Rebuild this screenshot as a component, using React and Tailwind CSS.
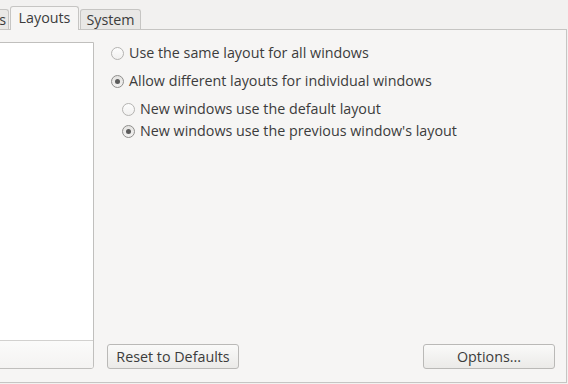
import React from 'react';

const Radio = ({ checked }) => (
    <span
        className={`w-[13px] h-[13px] rounded-full border flex items-center justify-center shrink-0 ${
            checked
                ? 'border-[#8f8e8c] bg-gradient-to-b from-[#e4e3e1] to-[#f3f2f1]'
                : 'border-[#b4b3b1] bg-gradient-to-b from-[#fdfdfd] to-[#f1f0ef]'
        }`}
    >
        {checked && <span className="w-[5px] h-[5px] rounded-full bg-[#5b5b5b]" />}
    </span>
);

const Option = ({ checked, label, className = '' }) => (
    <div className={`flex items-center h-[20px] gap-[5px] ${className}`}>
        <Radio checked={checked} />
        <span className="leading-[20px]">{label}</span>
    </div>
);

const Button = ({ children }) => (
    <button className="w-[132px] h-[25px] rounded-[3px] border border-[#bab9b7] bg-gradient-to-b from-[#fafaf9] to-[#ebeae8] text-[#3c3c3c] flex items-center justify-center">
        {children}
    </button>
);

const App = () => {
    return (
        <div
            className="w-[568px] h-[384px] overflow-hidden bg-[#f2f1f0] text-[#3c3c3c] text-[14.3px]"
            style={{ fontFamily: '"Open Sans", "Noto Sans", sans-serif' }}
        >
            {/* tabs */}
            <div className="h-[29px] flex items-end">
                <div className="w-[9px] h-[20px] border-t border-r border-[#c6c5c3] bg-[#e9e8e6] rounded-tr-[3px] flex items-center justify-end pr-[2px] overflow-hidden">
                    <span>s</span>
                </div>
                <div className="ml-[1px] w-[69px] h-[24px] -mb-px relative z-10 border border-b-0 border-[#c6c5c3] bg-[#f6f5f4] rounded-t-[3px] flex items-center justify-center pb-[1px]">
                    Layouts
                </div>
                <div className="ml-[1px] w-[61px] h-[20px] border border-b-0 border-[#c6c5c3] bg-[#e9e8e6] rounded-t-[3px] flex items-center justify-center">
                    System
                </div>
            </div>

            {/* panel */}
            <div className="-ml-px w-[568px] h-[354px] border border-[#c6c5c3] bg-[#f6f5f4] flex pt-[12px] pb-[13px]">
                <div className="-ml-px w-[95px] border border-[#c0bfbd] rounded-br-[3px] bg-white flex flex-col overflow-hidden">
                    <div className="flex-1" />
                    <div className="h-[28px] border-t border-[#d2d1cf] bg-gradient-to-b from-[#fbfbfa] to-[#f4f3f2]" />
                </div>

                <div className="ml-[13px] flex-1 pr-[11px] flex flex-col justify-between">
                    <div className="pl-[4px] pt-[1px]">
                        <Option label="Use the same layout for all windows" />
                        <Option checked className="mt-[8px]" label="Allow different layouts for individual windows" />
                        <div className="pl-[11px]">
                            <Option className="mt-[8px]" label="New windows use the default layout" />
                            <Option checked className="mt-[2px]" label="New windows use the previous window's layout" />
                        </div>
                    </div>
                    <div className="flex justify-between">
                        <Button>Reset to Defaults</Button>
                        <Button>Options...</Button>
                    </div>
                </div>
            </div>
        </div>
    );
};

export default App;
